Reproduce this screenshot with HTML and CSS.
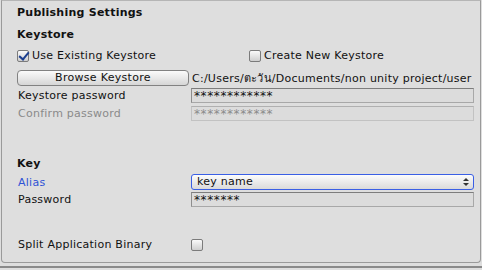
FILE: index.html
```html
<!DOCTYPE html>
<html lang="en">
<head>
    <meta charset="UTF-8">
    <title>Publishing Settings</title>
    <link rel="stylesheet" href="styles.css">
</head>
<body>

    <div class="panel">
        <h2 class="title">Publishing Settings</h2>

        <h3 class="section">Keystore</h3>

        <div class="check-row">
            <label class="check"><span class="box checked"></span>Use Existing Keystore</label>
            <label class="check"><span class="box"></span>Create New Keystore</label>
        </div>

        <div class="row browse-row">
            <button class="btn">Browse Keystore</button>
            <span class="path">C:/Users/ตะวัน/Documents/non unity project/user</span>
        </div>

        <div class="row">
            <span class="label">Keystore password</span>
            <div class="field">************</div>
        </div>
        <div class="row disabled">
            <span class="label">Confirm password</span>
            <div class="field">************</div>
        </div>

        <h3 class="section key">Key</h3>

        <div class="row">
            <span class="label alias">Alias</span>
            <div class="popup">key name<span class="arrows"></span></div>
        </div>
        <div class="row">
            <span class="label">Password</span>
            <div class="field">*******</div>
        </div>

        <div class="row split">
            <span class="label">Split Application Binary</span>
            <span class="box"></span>
        </div>
    </div>
    <div class="footer"></div>

</body>
</html>
```

FILE: styles.css
```css
* {
    margin: 0;
    padding: 0;
    box-sizing: border-box;
    font-family: "DejaVu Sans", Verdana, sans-serif;
}

body {
    width: 482px;
    height: 270px;
    background-color: #dedede;
    font-size: 11px;
    letter-spacing: 0.25px;
    color: #111;
    overflow: hidden;
}

.panel {
    margin: 0 1px 0 1px;
    height: 263px;
    border: 1px solid #9a9a9a;
    border-top-color: #b5b5b5;
    border-radius: 0 0 4px 4px;
    padding: 4px 8px 0 15px;
}

.title {
    font-size: 11px;
    font-weight: bold;
    line-height: 15px;
}

.section {
    font-size: 11px;
    font-weight: bold;
    line-height: 15px;
    margin-top: 7px;
}

.section.key {
    margin-top: 35px;
}

.check-row {
    display: grid;
    grid-template-columns: 232px 1fr;
    margin-top: 6px;
    height: 15px;
}

.check {
    display: flex;
    align-items: center;
    gap: 3px;
    line-height: 15px;
}

.box {
    display: inline-block;
    width: 12px;
    height: 12px;
    border: 1px solid #7b7b7b;
    border-radius: 2px;
    background: linear-gradient(#fafafa, #cfcfcf);
    position: relative;
}

.box.checked::after {
    content: "";
    position: absolute;
    left: 3px;
    top: -1px;
    width: 4px;
    height: 8px;
    border: solid #1c3f8f;
    border-width: 0 2px 2px 0;
    transform: rotate(40deg);
}

.row {
    display: grid;
    grid-template-columns: 174px 283px;
    align-items: center;
    height: 15px;
    margin-top: 3px;
}

.browse-row {
    margin-top: 6px;
    height: 16px;
}

.btn {
    width: 172px;
    height: 16px;
    border: 1px solid #828282;
    border-radius: 4px;
    background: linear-gradient(#fbfbfb, #d6d6d6);
    font-size: 11px;
    letter-spacing: 0.3px;
    color: #111;
    line-height: 14px;
}

.path {
    padding-left: 1px;
    white-space: nowrap;
}

.label {
    padding-left: 1px;
}

.field {
    height: 15px;
    border: 1px solid #a8a8a8;
    border-top-color: #7d7d7d;
    border-left-color: #8e8e8e;
    background-color: #dcdcdc;
    padding-left: 2px;
    line-height: 15px;
    font-size: 12px;
    letter-spacing: 0.6px;
    overflow: hidden;
}

.disabled .label,
.disabled .field {
    color: #8a8a8a;
}

.disabled .field {
    border-color: #c2c2c2;
    border-top-color: #b0b0b0;
}

.alias {
    color: #2e52d6;
}

.popup {
    position: relative;
    height: 16px;
    border: 1px solid #3a5fe5;
    border-radius: 3px;
    background: linear-gradient(#fcfcfc, #dadada);
    padding-left: 5px;
    line-height: 14px;
}

.arrows::before,
.arrows::after {
    content: "";
    position: absolute;
    right: 4px;
    border-left: 3px solid transparent;
    border-right: 3px solid transparent;
}

.arrows::before {
    top: 3px;
    border-bottom: 3px solid #333;
}

.arrows::after {
    top: 8px;
    border-top: 3px solid #333;
}

.split {
    margin-top: 31px;
    height: 12px;
}

.footer {
    height: 2px;
    background-color: #8a8a8a;
    margin-top: 3px;
}
```
